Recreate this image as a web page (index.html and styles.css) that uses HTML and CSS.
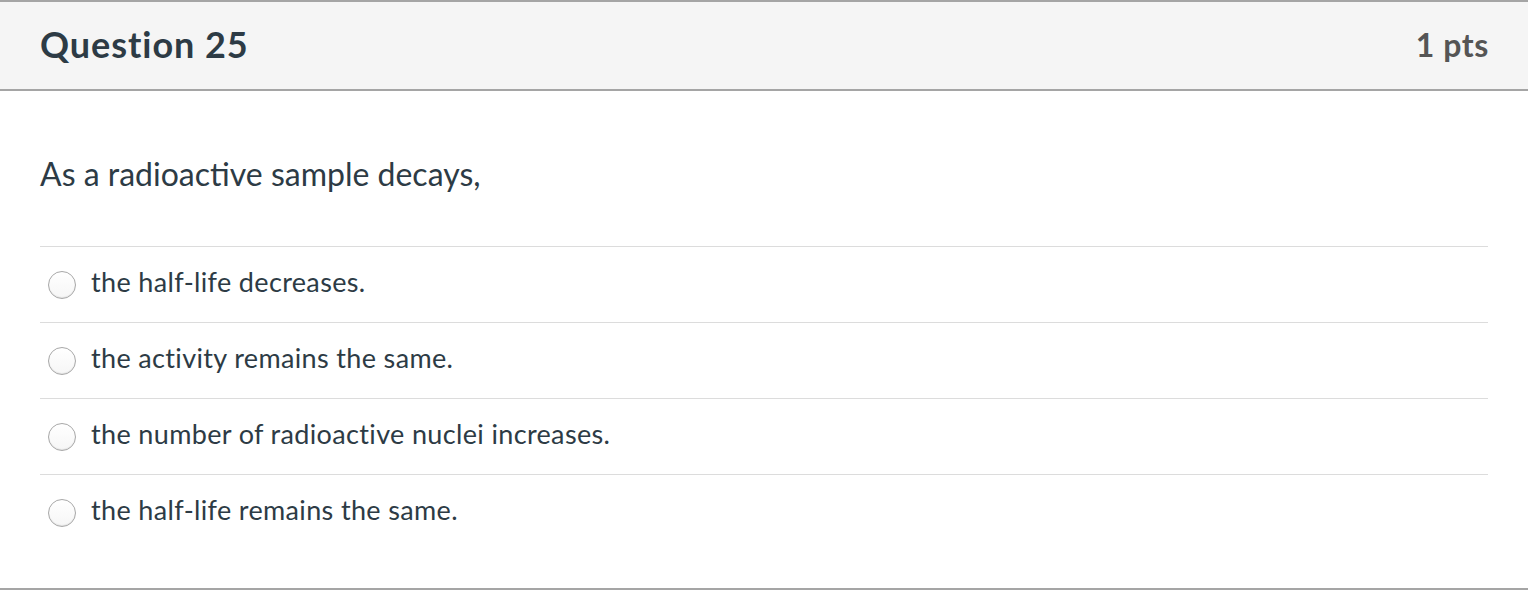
FILE: index.html
```html
<!DOCTYPE html>
<html>
<head>
<meta charset="utf-8">
<link rel="stylesheet" href="styles.css">
</head>
<body>
<div class="question">
  <div class="header">
    <div class="title">Question 25</div>
    <div class="pts">1 pts</div>
  </div>
  <div class="content">
    <div class="prompt">As a radioactive sample decays,</div>
    <div class="answers">
      <label class="answer"><span class="radio"></span><span class="atext">the half-life decreases.</span></label>
      <label class="answer"><span class="radio"></span><span class="atext">the activity remains the same.</span></label>
      <label class="answer"><span class="radio"></span><span class="atext">the number of radioactive nuclei increases.</span></label>
      <label class="answer"><span class="radio"></span><span class="atext">the half-life remains the same.</span></label>
    </div>
  </div>
</div>
</body>
</html>
```

FILE: styles.css
```css
html, body {
  margin: 0;
  padding: 0;
  background: #ffffff;
}
body {
  font-family: Lato, "Open Sans", sans-serif;
  color: #2d3b45;
}
.question {
  border-top: 2px solid #a5a5a5;
  border-bottom: 2px solid #a5a5a5;
  width: 1528px;
  box-sizing: border-box;
}
.header {
  height: 87px;
  background: #f5f5f5;
  border-bottom: 2px solid #a5a5a5;
  display: flex;
  align-items: center;
  justify-content: space-between;
  padding: 0 40px;
}
.title {
  font-size: 36px;
  font-weight: 700;
  letter-spacing: 0.95px;
  color: #2d3b45;
  margin-top: -4px;
}
.pts {
  font-size: 32px;
  font-weight: 700;
  letter-spacing: 0.6px;
  color: #555555;
  margin-top: -2px;
  margin-right: -1px;
}
.content {
  padding: 0 40px;
  height: 497px;
}
.prompt {
  font-size: 32px;
  line-height: 36px;
  padding-top: 65px;
  height: 155px;
  box-sizing: border-box;
}
.answers {
  display: flex;
  flex-direction: column;
}
.answer {
  display: flex;
  align-items: center;
  height: 76px;
  border-top: 1px solid #dcdcdc;
  box-sizing: border-box;
  padding-left: 8px;
}
.radio {
  width: 28px;
  height: 28px;
  box-sizing: border-box;
  border-radius: 50%;
  border: 1px solid #a8a8a8;
  background: linear-gradient(#ffffff, #f6f6f6);
  box-shadow: inset 0 -1px 1px rgba(0,0,0,0.08);
  margin-right: 15px;
  flex: none;
}
.atext {
  font-size: 27px;
  letter-spacing: 0.35px;
  color: #2d3b45;
  margin-top: -6.5px;
}
```
